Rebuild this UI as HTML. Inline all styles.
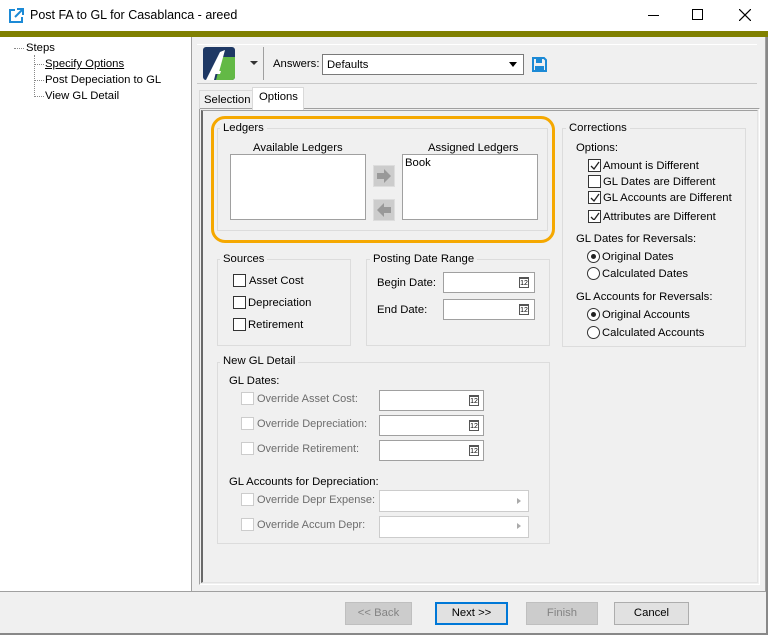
<!DOCTYPE html>
<html><head><style>
*{box-sizing:border-box;margin:0;padding:0}
body{width:768px;height:635px;position:relative;background:#f0f0f0;font-family:"Liberation Sans",sans-serif;font-size:11.3px;color:#000;overflow:hidden}
.a{position:absolute}
.box{position:absolute;border:1px solid #dcdcdc}
.lg{position:absolute;background:#f0f0f0;padding:0 3px;line-height:13px}
.inp{position:absolute;background:#fff;border:1px solid #a0a0a0}
.cb{position:absolute;width:13px;height:13px;border:1px solid #333;background:#fff}
.cbd{position:absolute;width:13px;height:13px;border:1px solid #ccc;background:#fff}
.rb{position:absolute;width:13px;height:13px;border:1px solid #333;border-radius:50%;background:#fff}
.t{position:absolute;white-space:nowrap;line-height:14px}
.g{color:#6d6d6d;font-size:11px}
.btn{position:absolute;height:23px;border:1px solid #adadad;background:#e1e1e1;text-align:center;line-height:21px;width:75px}
.cal{position:absolute;width:10px;height:11px;border:1px solid #555;font-size:7px;line-height:9px;text-align:center;border-top-width:2px}
</style></head><body>
<div class="a" style="left:0;top:0;width:768px;height:31px;background:#fff"></div>
<svg class="a" style="left:8px;top:8px" width="16" height="16" viewBox="0 0 16 16"><path d="M7 2H2v12h12V9" fill="none" stroke="#1c8ad6" stroke-width="2"/><path d="M9 1h6v6M15 1L7 9" fill="none" stroke="#1c8ad6" stroke-width="2"/></svg>
<div class="t" style="left:30px;top:8px;font-size:12.5px">Post FA to GL for Casablanca - areed</div>
<div class="a" style="left:648px;top:15px;width:11px;height:1px;background:#000"></div>
<div class="a" style="left:692px;top:9px;width:11px;height:11px;border:1px solid #000"></div>
<svg class="a" style="left:739px;top:9px" width="12" height="12"><path d="M0 0L12 12M12 0L0 12" stroke="#000" stroke-width="1.2"/></svg>
<div class="a" style="left:0;top:31px;width:768px;height:6px;background:#808000"></div>
<div class="a" style="left:0;top:37px;width:192px;height:554px;background:#fff;border-right:1px solid #a0a0a0"></div>
<div class="a" style="left:14px;top:48px;width:10px;border-top:1px dotted #888"></div>
<div class="t" style="left:26px;top:41px">Steps</div>
<div class="a" style="left:34px;top:55px;height:42px;border-left:1px dotted #888"></div>
<div class="a" style="left:35px;top:64px;width:9px;border-top:1px dotted #888"></div>
<div class="a" style="left:35px;top:80px;width:9px;border-top:1px dotted #888"></div>
<div class="a" style="left:35px;top:96px;width:9px;border-top:1px dotted #888"></div>
<div class="t" style="left:45px;top:57px;text-decoration:underline">Specify Options</div>
<div class="t" style="left:45px;top:73px">Post Depeciation to GL</div>
<div class="t" style="left:45px;top:89px">View GL Detail</div>
<div class="a" style="left:193px;top:37px;width:573px;height:554px;border-right:1px solid #a0a0a0"></div>
<div class="a" style="left:197px;top:44px;width:560px;height:1px;background:#fff"></div>
<div class="a" style="left:197px;top:83px;width:560px;height:1px;background:#c8c8c8"></div>
<svg class="a" style="left:203px;top:47px" width="32" height="33" viewBox="0 0 32 33"><rect width="32" height="33" rx="3" fill="#1e3864"/><path d="M19 10h13v20a3 3 0 0 1-3 3H13z" fill="#63b946"/><path d="M3 33L17 5l5-2-6 22h-3l-2 8z" fill="#fff"/><path d="M8 24h10l-1 3H7z" fill="#fff"/></svg>
<div class="a" style="left:250px;top:61px;border:4px solid transparent;border-top:4px solid #333"></div>
<div class="a" style="left:263px;top:47px;width:1px;height:33px;background:#a0a0a0"></div>
<div class="t" style="left:273px;top:57px">Answers:</div>
<div class="inp" style="left:322px;top:54px;width:202px;height:21px;border-color:#7a7a7a"></div>
<div class="t" style="left:327px;top:58px">Defaults</div>
<div class="a" style="left:509px;top:62px;border:4px solid transparent;border-top:5px solid #000"></div>
<svg class="a" style="left:532px;top:57px" width="15" height="15" viewBox="0 0 15 15"><path d="M1 1h11l2 2v11H1z" fill="none" stroke="#1c8ad6" stroke-width="2"/><rect x="4" y="2" width="6" height="4" fill="#1c8ad6"/><rect x="3" y="9" width="9" height="4" fill="#1c8ad6"/></svg>
<div class="a" style="left:199px;top:108px;width:561px;height:477px;border:1px solid #fff;border-top-color:#a0a0a0;border-left-color:#a0a0a0"></div>
<div class="a" style="left:201px;top:110px;width:557px;height:473px;border-left:2px solid #696969;border-top:1px solid #a0a0a0;border-right:1px solid #e3e3e3;border-bottom:1px solid #e3e3e3"></div>
<div class="a" style="left:199px;top:90px;width:54px;height:19px;border:1px solid #d9d9d9;border-bottom:none"></div>
<div class="t" style="left:204px;top:93px">Selection</div>
<div class="a" style="left:252px;top:87px;width:52px;height:23px;border:1px solid #d9d9d9;border-bottom:none;background:#fff"></div>
<div class="t" style="left:259px;top:90px">Options</div>
<div class="box" style="left:217px;top:128px;width:331px;height:103px"></div>
<div class="lg" style="left:220px;top:122px">Ledgers</div>
<div class="t" style="left:253px;top:141px">Available Ledgers</div>
<div class="t" style="left:428px;top:141px">Assigned Ledgers</div>
<div class="inp" style="left:230px;top:154px;width:136px;height:66px"></div>
<div class="inp" style="left:402px;top:154px;width:136px;height:66px"></div>
<div class="t" style="left:405px;top:156px">Book</div>
<div class="a" style="left:373px;top:165px;width:22px;height:22px;background:#ccc;border:1px solid #ddd"></div>
<div class="a" style="left:373px;top:199px;width:22px;height:22px;background:#ccc;border:1px solid #ddd"></div>
<svg class="a" style="left:376px;top:169px" width="16" height="14"><path d="M1 4h7V0l7 7-7 7v-4H1z" fill="#999"/></svg>
<svg class="a" style="left:376px;top:203px" width="16" height="14"><path d="M15 4H8V0L1 7l7 7v-4h7z" fill="#999"/></svg>
<div class="a" style="left:211px;top:116px;width:344px;height:127px;border:3px solid #f5a800;border-radius:14px"></div>
<div class="box" style="left:217px;top:259px;width:134px;height:87px"></div>
<div class="lg" style="left:220px;top:253px">Sources</div>
<div class="cb" style="left:233px;top:274px"></div><div class="t" style="left:249px;top:274px">Asset Cost</div>
<div class="cb" style="left:233px;top:296px"></div><div class="t" style="left:248px;top:296px">Depreciation</div>
<div class="cb" style="left:233px;top:318px"></div><div class="t" style="left:248px;top:318px">Retirement</div>
<div class="box" style="left:366px;top:259px;width:184px;height:87px"></div>
<div class="lg" style="left:370px;top:253px">Posting Date Range</div>
<div class="t" style="left:377px;top:276px">Begin Date:</div>
<div class="inp" style="left:443px;top:272px;width:92px;height:21px"></div><div class="cal" style="left:519px;top:277px">12</div>
<div class="t" style="left:377px;top:303px">End Date:</div>
<div class="inp" style="left:443px;top:299px;width:92px;height:21px"></div><div class="cal" style="left:519px;top:304px">12</div>
<div class="box" style="left:562px;top:128px;width:184px;height:219px"></div>
<div class="lg" style="left:566px;top:122px">Corrections</div>
<div class="t" style="left:576px;top:141px">Options:</div>
<div class="cb" style="left:588px;top:159px"></div><div class="t" style="left:603px;top:159px">Amount is Different</div>
<div class="cb" style="left:588px;top:175px"></div><div class="t" style="left:603px;top:175px">GL Dates are Different</div>
<div class="cb" style="left:588px;top:191px"></div><div class="t" style="left:603px;top:191px">GL Accounts are Different</div>
<div class="cb" style="left:588px;top:210px"></div><div class="t" style="left:603px;top:210px">Attributes are Different</div>
<svg class="a" style="left:589px;top:160px" width="11" height="60"><path d="M2 6l3 3 5-7M2 38l3 3 5-7M2 57l3 3 5-7" fill="none" stroke="#222" stroke-width="1.3"/></svg>
<div class="t" style="left:576px;top:232px">GL Dates for Reversals:</div>
<div class="rb" style="left:587px;top:250px"></div><div class="a" style="left:591px;top:254px;width:5px;height:5px;border-radius:50%;background:#222"></div><div class="t" style="left:602px;top:250px">Original Dates</div>
<div class="rb" style="left:587px;top:267px"></div><div class="t" style="left:602px;top:267px">Calculated Dates</div>
<div class="t" style="left:576px;top:290px">GL Accounts for Reversals:</div>
<div class="rb" style="left:587px;top:308px"></div><div class="a" style="left:591px;top:312px;width:5px;height:5px;border-radius:50%;background:#222"></div><div class="t" style="left:602px;top:308px">Original Accounts</div>
<div class="rb" style="left:587px;top:326px"></div><div class="t" style="left:602px;top:326px">Calculated Accounts</div>
<div class="box" style="left:217px;top:362px;width:333px;height:182px"></div>
<div class="lg" style="left:220px;top:355px">New GL Detail</div>
<div class="t" style="left:229px;top:374px">GL Dates:</div>
<div class="cbd" style="left:241px;top:392px"></div><div class="t g" style="left:257px;top:392px">Override Asset Cost:</div>
<div class="inp" style="left:379px;top:390px;width:105px;height:21px"></div><div class="cal" style="left:469px;top:395px">12</div>
<div class="cbd" style="left:241px;top:417px"></div><div class="t g" style="left:257px;top:417px">Override Depreciation:</div>
<div class="inp" style="left:379px;top:415px;width:105px;height:21px"></div><div class="cal" style="left:469px;top:420px">12</div>
<div class="cbd" style="left:241px;top:442px"></div><div class="t g" style="left:257px;top:442px">Override Retirement:</div>
<div class="inp" style="left:379px;top:440px;width:105px;height:21px"></div><div class="cal" style="left:469px;top:445px">12</div>
<div class="t" style="left:229px;top:475px">GL Accounts for Depreciation:</div>
<div class="cbd" style="left:241px;top:493px"></div><div class="t g" style="left:257px;top:493px">Override Depr Expense:</div>
<div class="inp" style="left:379px;top:490px;width:150px;height:22px;border-color:#ccc"></div><div class="a" style="left:517px;top:498px;border:3px solid transparent;border-left:4px solid #aaa"></div>
<div class="cbd" style="left:241px;top:518px"></div><div class="t g" style="left:257px;top:518px">Override Accum Depr:</div>
<div class="inp" style="left:379px;top:516px;width:150px;height:22px;border-color:#ccc"></div><div class="a" style="left:517px;top:523px;border:3px solid transparent;border-left:4px solid #aaa"></div>
<div class="a" style="left:0;top:591px;width:768px;height:1px;background:#a0a0a0"></div>
<div class="btn" style="left:345px;top:602px;width:67px;background:#ccc;border-color:#bfbfbf;color:#838383">&lt;&lt; Back</div>
<div class="btn" style="left:435px;top:602px;width:73px;border:2px solid #0078d7;line-height:19px">Next &gt;&gt;</div>
<div class="btn" style="left:526px;top:602px;width:72px;background:#ccc;border-color:#bfbfbf;color:#838383">Finish</div>
<div class="btn" style="left:614px;top:602px;width:75px">Cancel</div>
<div class="a" style="left:0;top:633px;width:768px;height:2px;background:#888"></div>
<div class="a" style="left:766px;top:37px;width:2px;height:598px;background:#888"></div>
</body></html>
